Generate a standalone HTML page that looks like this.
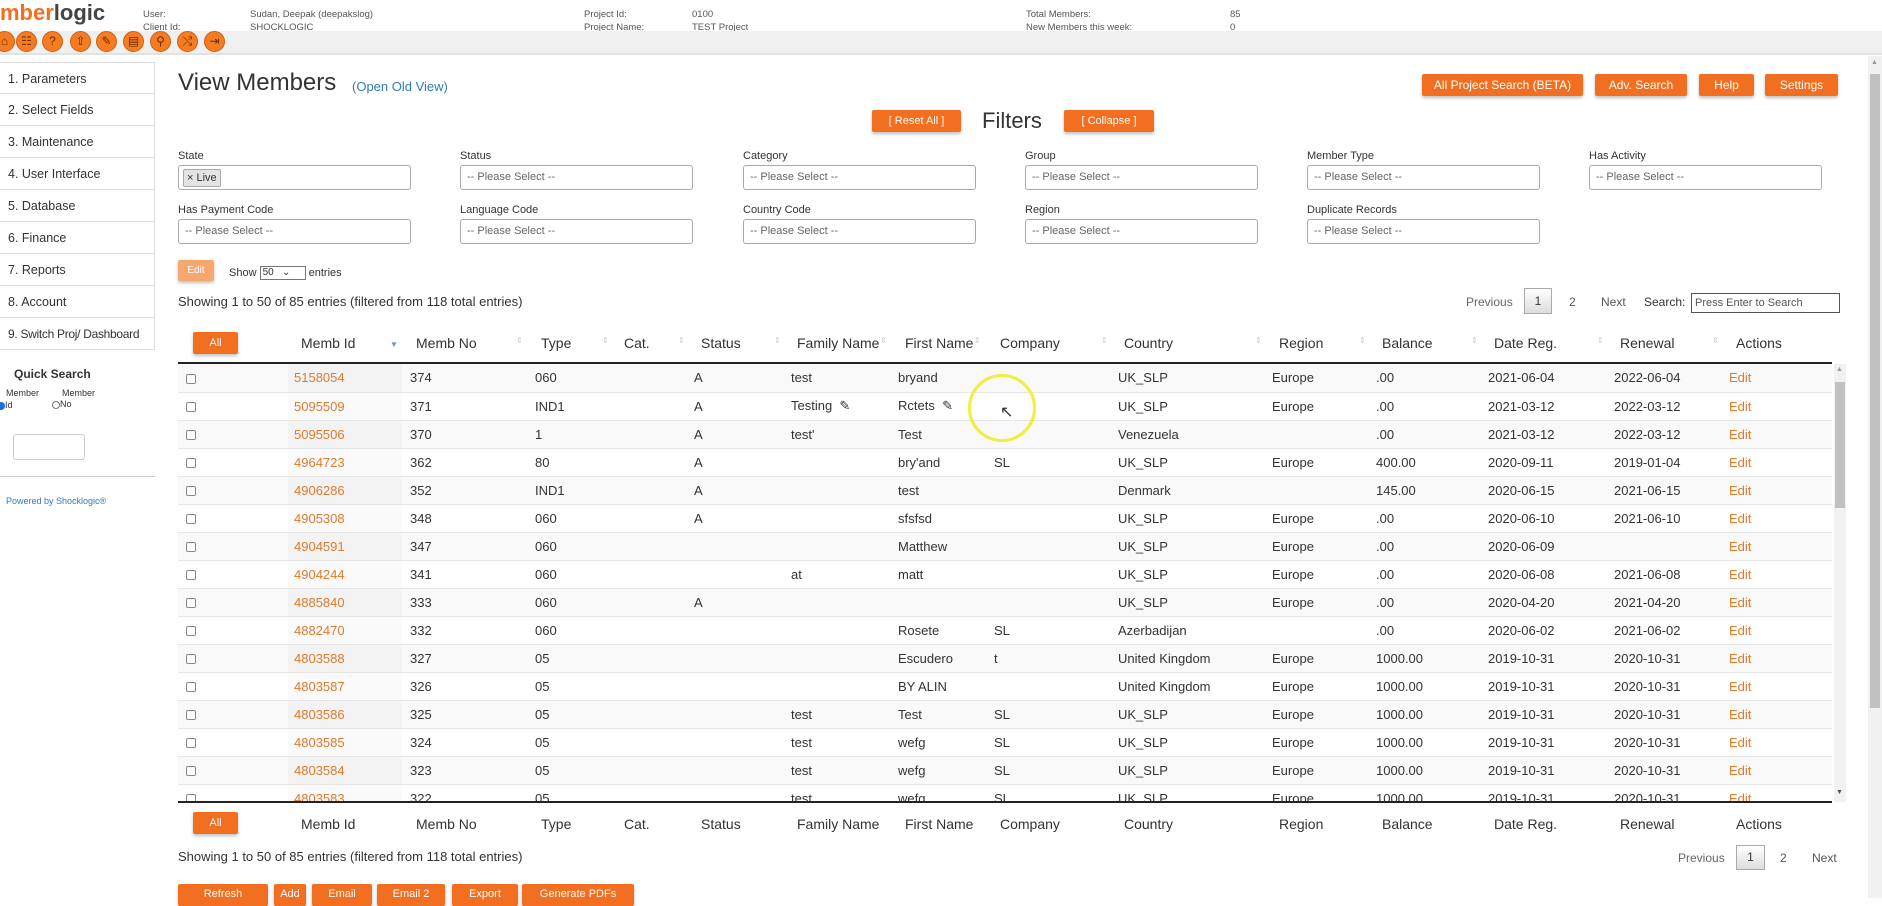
<!DOCTYPE html>
<html><head><meta charset="utf-8"><style>
*{box-sizing:border-box;margin:0;padding:0}
body{width:1882px;height:898px;overflow:hidden;background:#fff;font-family:"Liberation Sans",Arial,sans-serif;color:#333;position:relative}
.a{position:absolute;white-space:nowrap}
.hs{font-size:9.5px;color:#555}
.ob{position:absolute;background:#f26f21;color:#fff;font-size:12px;text-align:center;border-radius:2px;box-shadow:0 2px 3px rgba(0,0,0,.25);white-space:nowrap}
.side{position:absolute;left:0;width:155px;height:32px;border-bottom:1px solid #ddd;border-right:1px solid #ddd;font-size:12.5px;line-height:32px;padding-left:8px;color:#333;white-space:nowrap;overflow:hidden}
.lbl{position:absolute;font-size:11px;color:#333}
.sel{position:absolute;width:233px;height:25px;border:1px solid #aaa;border-radius:3px;font-size:11px;color:#666;padding:5px 0 0 6px;background:#fff}
.ic{position:absolute;top:31px;width:21px;height:21px;border-radius:50%;background:#f57c22;border:1px solid #d65f10;color:#6b2c00;font-size:12px;text-align:center;line-height:19px}
table{border-collapse:collapse;table-layout:fixed;position:absolute;left:178px;top:364px;width:1654px;font-size:13px;color:#333}
td{height:28px;padding-left:8px;border-bottom:1px solid #e6e6e6;white-space:nowrap;overflow:hidden}
tr:nth-child(odd) td{background:#f9f9f9}
td.m{background:#f3f3f3!important;color:#e07a2e;padding-left:6px}
tr:nth-child(even) td.m{background:#fafafa!important}
td.e{color:#e07a2e}
.cb{display:inline-block;width:10px;height:10px;border:1px solid #888;border-radius:2px;background:#fff;vertical-align:middle}
.th{position:absolute;font-size:14px;color:#333}
.ar{position:absolute;font-size:8px;color:#ccc}
.pg{font-size:12px;color:#555}
</style></head><body>

<div class="a" style="left:0;top:0;font-size:22px;line-height:26px;font-weight:bold;color:#f26f21">mber<span style="color:#444">logic</span></div>
<div class="a hs" style="left:143px;top:9px">User:</div>
<div class="a hs" style="left:143px;top:22px;height:10px;overflow:hidden">Client Id:</div>
<div class="a hs" style="left:250px;top:9px">Sudan, Deepak (deepakslog)</div>
<div class="a hs" style="left:250px;top:22px;height:10px;overflow:hidden">SHOCKLOGIC</div>
<div class="a hs" style="left:584px;top:9px">Project Id:</div>
<div class="a hs" style="left:584px;top:22px;height:10px;overflow:hidden">Project Name:</div>
<div class="a hs" style="left:692px;top:9px">0100</div>
<div class="a hs" style="left:692px;top:22px;height:10px;overflow:hidden">TEST Project</div>
<div class="a hs" style="left:1026px;top:9px">Total Members:</div>
<div class="a hs" style="left:1026px;top:22px;height:10px;overflow:hidden">New Members this week:</div>
<div class="a hs" style="left:1230px;top:9px">85</div>
<div class="a hs" style="left:1230px;top:22px;height:10px;overflow:hidden">0</div>
<div class="a" style="left:0;top:31px;width:1882px;height:24px;background:#f0f0f0;border-bottom:2px solid #e2e2e2"></div>
<div class="ic" style="left:-6px">⌂</div>
<div class="ic" style="left:16px">☷</div>
<div class="ic" style="left:42px">?</div>
<div class="ic" style="left:70px">⇧</div>
<div class="ic" style="left:96px">✎</div>
<div class="ic" style="left:123px">▤</div>
<div class="ic" style="left:150px">⚲</div>
<div class="ic" style="left:177px">⤭</div>
<div class="ic" style="left:204px">⇥</div>

<div class="side" style="top:62px;border-top:1px solid #ddd">1. Parameters</div>
<div class="side" style="top:94px">2. Select Fields</div>
<div class="side" style="top:126px">3. Maintenance</div>
<div class="side" style="top:158px">4. User Interface</div>
<div class="side" style="top:190px">5. Database</div>
<div class="side" style="top:222px">6. Finance</div>
<div class="side" style="top:254px">7. Reports</div>
<div class="side" style="top:286px">8. Account</div>
<div class="side" style="top:318px;font-size:12px;letter-spacing:-0.3px">9. Switch Proj/ Dashboard</div>
<div class="a" style="left:14px;top:367px;font-size:12px;font-weight:bold;color:#333">Quick Search</div>
<div class="a" style="left:6px;top:388px;font-size:9px">Member</div>
<div class="a" style="left:62px;top:388px;font-size:9px">Member</div>
<div class="a" style="left:-3px;top:400px;font-size:9px"><span style="display:inline-block;width:8px;height:8px;border-radius:50%;background:#1a6fe0;vertical-align:middle"></span>Id</div>
<div class="a" style="left:52px;top:399px;font-size:9px"><span style="display:inline-block;width:8px;height:8px;border-radius:50%;border:1px solid #777;vertical-align:middle"></span>No</div>
<div class="a" style="left:13px;top:434px;width:72px;height:26px;border:1px solid #ccc;border-radius:3px"></div>
<div class="a" style="left:0;top:476px;width:155px;height:1px;background:#ccc"></div>
<div class="a" style="left:6px;top:496px;font-size:9px;color:#337ab7">Powered by Shocklogic®</div>

<div class="a" style="left:178px;top:69px;font-size:24px;color:#333">View Members</div>
<div class="a" style="left:352px;top:79px;font-size:13px;color:#337ab7">(Open Old View)</div>
<div class="ob" style="left:1422px;top:74px;width:161px;height:22px;line-height:22px">All Project Search (BETA)</div>
<div class="ob" style="left:1595px;top:74px;width:92px;height:22px;line-height:22px">Adv. Search</div>
<div class="ob" style="left:1699px;top:74px;width:55px;height:22px;line-height:22px">Help</div>
<div class="ob" style="left:1765px;top:74px;width:73px;height:22px;line-height:22px">Settings</div>
<div class="ob" style="left:872px;top:110px;width:89px;height:22px;line-height:22px;font-size:11px">[ Reset All ]</div>
<div class="a" style="left:982px;top:108px;font-size:22px;color:#333">Filters</div>
<div class="ob" style="left:1064px;top:110px;width:90px;height:22px;line-height:22px;font-size:11px">[ Collapse ]</div>

<div class="lbl" style="left:178px;top:150px">State</div>
<div class="sel" style="left:178px;top:165px;padding:3px 0 0 4px"><span style="display:inline-block;background:#e4e4e4;border:1px solid #aaa;border-radius:2px;padding:2px 3px;color:#333;font-size:11px">× Live</span></div>
<div class="lbl" style="left:460px;top:150px">Status</div><div class="sel" style="left:460px;top:165px">-- Please Select --</div>
<div class="lbl" style="left:743px;top:150px">Category</div><div class="sel" style="left:743px;top:165px">-- Please Select --</div>
<div class="lbl" style="left:1025px;top:150px">Group</div><div class="sel" style="left:1025px;top:165px">-- Please Select --</div>
<div class="lbl" style="left:1307px;top:150px">Member Type</div><div class="sel" style="left:1307px;top:165px">-- Please Select --</div>
<div class="lbl" style="left:1589px;top:150px">Has Activity</div><div class="sel" style="left:1589px;top:165px">-- Please Select --</div>
<div class="lbl" style="left:178px;top:204px">Has Payment Code</div><div class="sel" style="left:178px;top:219px">-- Please Select --</div>
<div class="lbl" style="left:460px;top:204px">Language Code</div><div class="sel" style="left:460px;top:219px">-- Please Select --</div>
<div class="lbl" style="left:743px;top:204px">Country Code</div><div class="sel" style="left:743px;top:219px">-- Please Select --</div>
<div class="lbl" style="left:1025px;top:204px">Region</div><div class="sel" style="left:1025px;top:219px">-- Please Select --</div>
<div class="lbl" style="left:1307px;top:204px">Duplicate Records</div><div class="sel" style="left:1307px;top:219px">-- Please Select --</div>

<div class="ob" style="left:178px;top:260px;width:36px;height:21px;line-height:21px;background:#f7a66e;font-size:10px">Edit</div>
<div class="a" style="left:229px;top:266px;font-size:11px">Show <span style="display:inline-block;width:46px;height:14px;border:1px solid #777;font-size:10px;vertical-align:middle;padding-left:2px">50 &nbsp;&nbsp;⌄</span> entries</div>
<div class="a" style="left:178px;top:294px;font-size:13px">Showing 1 to 50 of 85 entries (filtered from 118 total entries)</div>

<div class="a pg" style="left:1466px;top:295px;color:#666">Previous</div>
<div class="a" style="left:1524px;top:288px;width:28px;height:26px;border:1px solid #aaa;background:linear-gradient(#fff,#ddd);font-size:12px;text-align:center;line-height:24px">1</div>
<div class="a pg" style="left:1569px;top:295px">2</div>
<div class="a pg" style="left:1601px;top:295px">Next</div>
<div class="a" style="left:1644px;top:295px;font-size:12px">Search:</div>
<div class="a" style="left:1691px;top:293px;width:149px;height:20px;border:1px solid #555;font-size:11px;padding:3px 0 0 3px;color:#555">Press Enter to Search</div>

<div class="ob" style="left:193px;top:332px;width:45px;height:22px;line-height:22px;font-size:11px">All</div>
<div class="th" style="left:301px;top:335px">Memb Id</div><div class="ar" style="left:390px;top:340px;color:#6d8fbf">▼</div>
<div class="th" style="left:416px;top:335px">Memb No</div><div class="ar" style="left:516px;top:336px">⇕</div>
<div class="th" style="left:541px;top:335px">Type</div><div class="ar" style="left:602px;top:336px">⇕</div>
<div class="th" style="left:624px;top:335px">Cat.</div><div class="ar" style="left:678px;top:336px">⇕</div>
<div class="th" style="left:701px;top:335px">Status</div><div class="ar" style="left:774px;top:336px">⇕</div>
<div class="th" style="left:797px;top:335px">Family Name</div><div class="ar" style="left:880px;top:336px">⇕</div>
<div class="th" style="left:905px;top:335px">First Name</div><div class="ar" style="left:974px;top:336px">⇕</div>
<div class="th" style="left:1000px;top:335px">Company</div><div class="ar" style="left:1101px;top:336px">⇕</div>
<div class="th" style="left:1124px;top:335px">Country</div><div class="ar" style="left:1255px;top:336px">⇕</div>
<div class="th" style="left:1279px;top:335px">Region</div><div class="ar" style="left:1359px;top:336px">⇕</div>
<div class="th" style="left:1382px;top:335px">Balance</div><div class="ar" style="left:1471px;top:336px">⇕</div>
<div class="th" style="left:1494px;top:335px">Date Reg.</div><div class="ar" style="left:1597px;top:336px">⇕</div>
<div class="th" style="left:1620px;top:335px">Renewal</div><div class="ar" style="left:1712px;top:336px">⇕</div>
<div class="th" style="left:1736px;top:335px">Actions</div>
<div class="a" style="left:178px;top:362px;width:1654px;height:2px;background:#222"></div>

<div class="a" style="left:0;top:364px;width:1834px;height:438px;overflow:hidden">
<table style="left:178px;top:0">
<colgroup><col style="width:110px"><col style="width:114px"><col style="width:125px"><col style="width:89px"><col style="width:70px"><col style="width:97px"><col style="width:107px"><col style="width:96px"><col style="width:124px"><col style="width:154px"><col style="width:104px"><col style="width:112px"><col style="width:126px"><col style="width:115px"><col style="width:111px"></colgroup>
<tr><td><span class="cb"></span></td><td class="m">5158054</td><td>374</td><td>060</td><td></td><td>A</td><td>test</td><td>bryand</td><td></td><td>UK_SLP</td><td>Europe</td><td>.00</td><td>2021-06-04</td><td>2022-06-04</td><td class="e">Edit</td></tr>
<tr><td><span class="cb"></span></td><td class="m">5095509</td><td>371</td><td>IND1</td><td></td><td>A</td><td>Testing &nbsp;✎</td><td>Rctets &nbsp;✎</td><td></td><td>UK_SLP</td><td>Europe</td><td>.00</td><td>2021-03-12</td><td>2022-03-12</td><td class="e">Edit</td></tr>
<tr><td><span class="cb"></span></td><td class="m">5095506</td><td>370</td><td>1</td><td></td><td>A</td><td>test'</td><td>Test</td><td></td><td>Venezuela</td><td></td><td>.00</td><td>2021-03-12</td><td>2022-03-12</td><td class="e">Edit</td></tr>
<tr><td><span class="cb"></span></td><td class="m">4964723</td><td>362</td><td>80</td><td></td><td>A</td><td></td><td>bry'and</td><td>SL</td><td>UK_SLP</td><td>Europe</td><td>400.00</td><td>2020-09-11</td><td>2019-01-04</td><td class="e">Edit</td></tr>
<tr><td><span class="cb"></span></td><td class="m">4906286</td><td>352</td><td>IND1</td><td></td><td>A</td><td></td><td>test</td><td></td><td>Denmark</td><td></td><td>145.00</td><td>2020-06-15</td><td>2021-06-15</td><td class="e">Edit</td></tr>
<tr><td><span class="cb"></span></td><td class="m">4905308</td><td>348</td><td>060</td><td></td><td>A</td><td></td><td>sfsfsd</td><td></td><td>UK_SLP</td><td>Europe</td><td>.00</td><td>2020-06-10</td><td>2021-06-10</td><td class="e">Edit</td></tr>
<tr><td><span class="cb"></span></td><td class="m">4904591</td><td>347</td><td>060</td><td></td><td></td><td></td><td>Matthew</td><td></td><td>UK_SLP</td><td>Europe</td><td>.00</td><td>2020-06-09</td><td></td><td class="e">Edit</td></tr>
<tr><td><span class="cb"></span></td><td class="m">4904244</td><td>341</td><td>060</td><td></td><td></td><td>at</td><td>matt</td><td></td><td>UK_SLP</td><td>Europe</td><td>.00</td><td>2020-06-08</td><td>2021-06-08</td><td class="e">Edit</td></tr>
<tr><td><span class="cb"></span></td><td class="m">4885840</td><td>333</td><td>060</td><td></td><td>A</td><td></td><td></td><td></td><td>UK_SLP</td><td>Europe</td><td>.00</td><td>2020-04-20</td><td>2021-04-20</td><td class="e">Edit</td></tr>
<tr><td><span class="cb"></span></td><td class="m">4882470</td><td>332</td><td>060</td><td></td><td></td><td></td><td>Rosete</td><td>SL</td><td>Azerbadijan</td><td></td><td>.00</td><td>2020-06-02</td><td>2021-06-02</td><td class="e">Edit</td></tr>
<tr><td><span class="cb"></span></td><td class="m">4803588</td><td>327</td><td>05</td><td></td><td></td><td></td><td>Escudero</td><td>t</td><td>United Kingdom</td><td>Europe</td><td>1000.00</td><td>2019-10-31</td><td>2020-10-31</td><td class="e">Edit</td></tr>
<tr><td><span class="cb"></span></td><td class="m">4803587</td><td>326</td><td>05</td><td></td><td></td><td></td><td>BY ALIN</td><td></td><td>United Kingdom</td><td>Europe</td><td>1000.00</td><td>2019-10-31</td><td>2020-10-31</td><td class="e">Edit</td></tr>
<tr><td><span class="cb"></span></td><td class="m">4803586</td><td>325</td><td>05</td><td></td><td></td><td>test</td><td>Test</td><td>SL</td><td>UK_SLP</td><td>Europe</td><td>1000.00</td><td>2019-10-31</td><td>2020-10-31</td><td class="e">Edit</td></tr>
<tr><td><span class="cb"></span></td><td class="m">4803585</td><td>324</td><td>05</td><td></td><td></td><td>test</td><td>wefg</td><td>SL</td><td>UK_SLP</td><td>Europe</td><td>1000.00</td><td>2019-10-31</td><td>2020-10-31</td><td class="e">Edit</td></tr>
<tr><td><span class="cb"></span></td><td class="m">4803584</td><td>323</td><td>05</td><td></td><td></td><td>test</td><td>wefg</td><td>SL</td><td>UK_SLP</td><td>Europe</td><td>1000.00</td><td>2019-10-31</td><td>2020-10-31</td><td class="e">Edit</td></tr>
<tr><td><span class="cb"></span></td><td class="m">4803583</td><td>322</td><td>05</td><td></td><td></td><td>test</td><td>wefg</td><td>SL</td><td>UK_SLP</td><td>Europe</td><td>1000.00</td><td>2019-10-31</td><td>2020-10-31</td><td class="e">Edit</td></tr>
</table>
</div>
<div class="a" style="left:1834px;top:364px;width:12px;height:438px;background:#f1f1f1"></div>
<div class="a" style="left:1835px;top:382px;width:10px;height:126px;background:#c1c1c1"></div>
<div class="a" style="left:1836px;top:366px;font-size:7px;color:#999">▲</div>
<div class="a" style="left:1836px;top:789px;font-size:7px;color:#555">▼</div>
<div class="a" style="left:178px;top:801px;width:1654px;height:2px;background:#222"></div>

<div class="a" style="left:968px;top:374px;width:68px;height:68px;border-radius:50%;border:3px solid #f0ee40"></div>
<div class="a" style="left:1000px;top:402px;font-size:16px;color:#333">↖</div>

<div class="ob" style="left:193px;top:812px;width:45px;height:22px;line-height:22px;font-size:11px">All</div>
<div class="th" style="left:301px;top:816px">Memb Id</div>
<div class="th" style="left:416px;top:816px">Memb No</div>
<div class="th" style="left:541px;top:816px">Type</div>
<div class="th" style="left:624px;top:816px">Cat.</div>
<div class="th" style="left:701px;top:816px">Status</div>
<div class="th" style="left:797px;top:816px">Family Name</div>
<div class="th" style="left:905px;top:816px">First Name</div>
<div class="th" style="left:1000px;top:816px">Company</div>
<div class="th" style="left:1124px;top:816px">Country</div>
<div class="th" style="left:1279px;top:816px">Region</div>
<div class="th" style="left:1382px;top:816px">Balance</div>
<div class="th" style="left:1494px;top:816px">Date Reg.</div>
<div class="th" style="left:1620px;top:816px">Renewal</div>
<div class="th" style="left:1736px;top:816px">Actions</div>

<div class="a" style="left:178px;top:849px;font-size:13px">Showing 1 to 50 of 85 entries (filtered from 118 total entries)</div>
<div class="a pg" style="left:1678px;top:851px;color:#666">Previous</div>
<div class="a" style="left:1736px;top:845px;width:29px;height:25px;border:1px solid #aaa;background:linear-gradient(#fff,#ddd);font-size:12px;text-align:center;line-height:23px">1</div>
<div class="a pg" style="left:1780px;top:851px">2</div>
<div class="a pg" style="left:1812px;top:851px">Next</div>

<div class="ob" style="left:178px;top:884px;width:90px;height:22px;padding-top:4px;font-size:11px">Refresh</div>
<div class="ob" style="left:274px;top:884px;width:32px;height:22px;padding-top:4px;font-size:11px">Add</div>
<div class="ob" style="left:312px;top:884px;width:60px;height:22px;padding-top:4px;font-size:11px">Email</div>
<div class="ob" style="left:377px;top:884px;width:68px;height:22px;padding-top:4px;font-size:11px">Email 2</div>
<div class="ob" style="left:452px;top:884px;width:66px;height:22px;padding-top:4px;font-size:11px">Export</div>
<div class="ob" style="left:522px;top:884px;width:112px;height:22px;padding-top:4px;font-size:11px">Generate PDFs</div>

<div class="a" style="left:1868px;top:56px;width:14px;height:842px;background:#f1f1f1"></div>
<div class="a" style="left:1870px;top:74px;width:10px;height:634px;background:#c1c1c1"></div>
<div class="a" style="left:1871px;top:59px;font-size:7px;color:#999">▲</div>
</body></html>
